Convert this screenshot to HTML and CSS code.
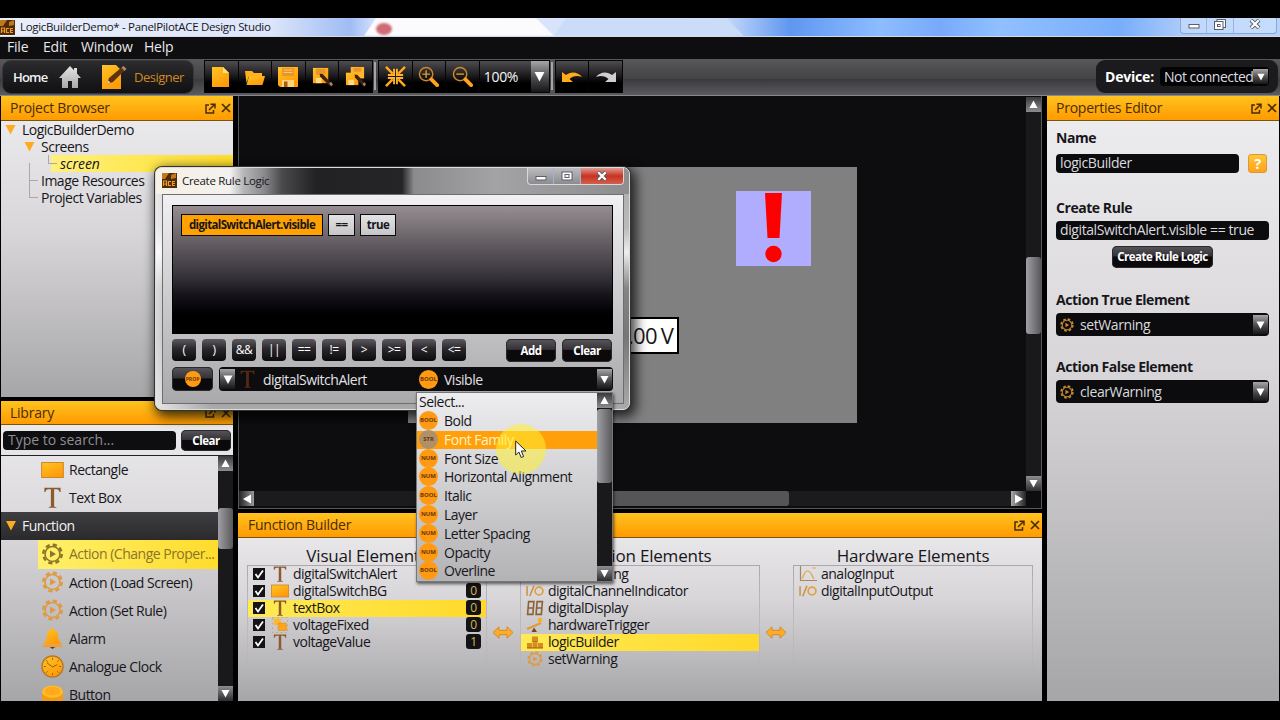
FILE: index.html
```html
<!DOCTYPE html>
<html>
    <head>
        <meta charset="UTF-8">
        <title>LogicBuilderDemo* - PanelPilotACE Design Studio</title>
        <link rel="stylesheet" href="styles.css">
    </head>
    <body>
        <svg class="defs" width="0" height="0">
            <defs>
                <linearGradient id="amber" x1="0" y1="0" x2="0.6" y2="1">
                    <stop offset="0" stop-color="#ffc526"/>
                    <stop offset="1" stop-color="#ff9a08"/>
                </linearGradient>
                <linearGradient id="silver" x1="0" y1="0" x2="0" y2="1">
                    <stop offset="0" stop-color="#e4e4e4"/>
                    <stop offset="1" stop-color="#a9a9ab"/>
                </linearGradient>
            </defs>
            <symbol id="i-app" viewBox="0 0 15 15">
                <rect width="15" height="15" fill="#4d2b0b"/>
                <path d="M0 0h7L3 6H0zM9 2l5-2v5l-5 1z" fill="#c07a1c"/>
                <path d="M1.5 13V8h3v5M2 11h2M9 8.500H6.500v4H9M13 8.500h-2.500v4H13M10.500 10.500H13" stroke="#ef9a22" stroke-width="1.200" fill="none"/>
            </symbol>
            <symbol id="i-pop" viewBox="0 0 11 11">
                <path d="M4 2H1v8h7.500V7M5.500 1.200H10v4.300M9.800 1.300L4 7" fill="none" stroke="currentColor" stroke-width="1.500"/>
            </symbol>
            <symbol id="i-close" viewBox="0 0 10 10">
                <path d="M1 1l8 8M9 1L1 9" stroke="currentColor" stroke-width="1.700"/>
            </symbol>
            <symbol id="i-down" viewBox="0 0 10 10"><path d="M0.500 1h9L5 9.500z" fill="currentColor"/></symbol>
            <symbol id="i-up" viewBox="0 0 10 10"><path d="M0.500 9h9L5 0.500z" fill="currentColor"/></symbol>
            <symbol id="i-left" viewBox="0 0 10 10"><path d="M9 0.500v9L1 5z" fill="currentColor"/></symbol>
            <symbol id="i-right" viewBox="0 0 10 10"><path d="M1 0.500v9L9 5z" fill="currentColor"/></symbol>
            <symbol id="i-home" viewBox="0 0 24 24">
                <path d="M12 1L1 13h3v10h6v-7h4v7h6V13h3l-4-4.500V3h-3v2.200z" fill="url(#silver)"/>
            </symbol>
            <symbol id="i-designer" viewBox="0 0 26 26">
                <path d="M1 1h14l5 5v19H1z" fill="url(#amber)"/>
                <path d="M6 20l2-6L21 3l3 3-12 12z" fill="#5d3210"/>
                <path d="M6 20l1-3.500 2.500 2z" fill="#f7d9a0"/>
                <path d="M20.500 3.500L22.500 2l3 3-2 2z" fill="#b08a70"/>
            </symbol>
            <symbol id="i-new" viewBox="0 0 22 22">
                <path d="M2 1h11l6 6v14H2z" fill="url(#amber)"/><path d="M13 1v6h6z" fill="#ffdf80"/>
            </symbol>
            <symbol id="i-open" viewBox="0 0 22 22">
                <path d="M1 5h7l2 2h8v3H5L2.500 17z" fill="#ffb21c"/><path d="M5 10h16l-2.500 9H2.500z" fill="url(#amber)"/>
            </symbol>
            <symbol id="i-save" viewBox="0 0 22 22">
                <path d="M1 1h20v20H3l-2-2z" fill="url(#amber)"/>
                <path d="M5 2h12v8H5z" fill="#e8952a"/><path d="M6.500 4h9M6.500 6.500h9" stroke="#ffc95e"/>
                <path d="M5 14h12v7H5z" fill="#ffd47a"/><path d="M7 15.500h3.500V21H7z" fill="#a85c14"/>
            </symbol>
            <symbol id="i-saveas" viewBox="0 0 22 22">
                <path d="M1 2h16v16H1z" fill="url(#amber)"/><path d="M4 3h10v6H4z" fill="#e8952a"/><path d="M4 12.500h6V18H4z" fill="#ffdb82"/>
                <path d="M8 8l3 .5 10 10-2.500 2.500-10-10z" fill="#3b2113"/><path d="M18 18l2-1.500 2 3-2 2z" fill="#b08060"/>
            </symbol>
            <symbol id="i-saveall" viewBox="0 0 22 22">
                <path d="M6 1h14v12H6z" fill="#ffb62a"/><path d="M1 7h13v13H1z" fill="url(#amber)"/>
                <path d="M9 2h8v4H9z" fill="#e8952a"/><path d="M3.500 14.500h6V20h-6z" fill="#ffdb82"/>
                <path d="M10 9l3 .5 8.500 9-2.500 2.500-8.500-9z" fill="#3b2113"/><path d="M18.500 18.500l2-1.500 1.500 2.500-2 2z" fill="#b08060"/>
            </symbol>
            <symbol id="i-fit" viewBox="0 0 22 22">
                <path d="M1 1l7 7M21 1l-7 7M1 21l7-7M21 21l-7-7" stroke="#ffa818" stroke-width="2.600"/>
                <path d="M9.500 3v6.500H3M12.500 3v6.500H19M9.500 19v-6.500H3M12.500 19v-6.500H19" stroke="#ffb12b" stroke-width="2" fill="none"/>
            </symbol>
            <symbol id="i-zoomin" viewBox="0 0 22 22">
                <circle cx="8.500" cy="8.500" r="7" fill="none" stroke="#c98a2b" stroke-width="1.500"/>
                <path d="M4.500 8.500h8M8.500 4.500v8" stroke="#d9982d" stroke-width="1.500"/>
                <path d="M14 14l6 6" stroke="#ffa41a" stroke-width="4" stroke-linecap="round"/>
            </symbol>
            <symbol id="i-zoomout" viewBox="0 0 22 22">
                <circle cx="8.500" cy="8.500" r="7" fill="none" stroke="#c98a2b" stroke-width="1.500"/>
                <path d="M4.500 8.500h8" stroke="#d9982d" stroke-width="1.500"/>
                <path d="M14 14l6 6" stroke="#ffa41a" stroke-width="4" stroke-linecap="round"/>
            </symbol>
            <symbol id="i-undo" viewBox="0 0 22 14">
                <path d="M1 2v10h11L8.500 9c3-2.500 7-4 12.500-2C17 1.500 9.500 1 5 5z" fill="#ffab1a"/>
            </symbol>
            <symbol id="i-redo" viewBox="0 0 22 14">
                <path d="M21 2v10H10l3.500-3C10.500 6.500 6.500 5 1 7 5 1.500 12.500 1 17 5z" fill="#cfcfd1"/>
            </symbol>
            <symbol id="i-rect" viewBox="0 0 24 17"><rect x=".5" y=".5" width="23" height="16" fill="url(#amber)" stroke="#c98324"/></symbol>
            <symbol id="i-text" viewBox="0 0 18 22">
                <path d="M.5 .8h17v4.500h-1.200c-.3-2-1-3-3-3h-2.600v17c0 1.200.6 1.500 2.300 1.600v.8H5v-.8c1.700-.1 2.300-.4 2.300-1.600v-17H4.700c-2 0-2.700 1-3 3H.5z" fill="currentColor"/>
            </symbol>
            <symbol id="i-gear" viewBox="0 0 22 22">
                <circle cx="11" cy="11" r="9.300" fill="none" stroke="currentColor" stroke-width="2.400" stroke-dasharray="4.200 3.100"/>
                <circle cx="11" cy="11" r="7.500" fill="none" stroke="currentColor" stroke-width="1.600"/>
                <path d="M8.500 7.500l6 3.500-6 3.500z" fill="currentColor"/>
            </symbol>
            <symbol id="i-bell" viewBox="0 0 22 22">
                <path d="M11 0c1.500 0 2 1 2 2 3.500 1 4 4 4 7 0 4 1.500 5 3.500 8H1.500C3.500 14 5 13 5 9c0-3 .5-6 4-7 0-1 .5-2 2-2z" fill="url(#amber)"/>
                <path d="M1 17.500h20v2.500H1z" fill="#f1a02c"/><path d="M8 20h6l-3 2z" fill="#6b3b10"/>
            </symbol>
            <symbol id="i-clock" viewBox="0 0 24 24">
                <circle cx="12" cy="12" r="11" fill="url(#amber)" stroke="#b87924" stroke-width="1.500"/>
                <path d="M6 8l6 4.500L17 10M12 3v2M12 19v2M3 12h2M19 12h2M5.500 5.500L7 7M17 17l1.500 1.500M5.500 18.500L7 17M17 7l1.500-1.500" stroke="#8f5b17" fill="none"/>
            </symbol>
            <symbol id="i-button" viewBox="0 0 24 22">
                <path d="M1 8v7c0 8 22 8 22 0V8z" fill="#f39b15"/><ellipse cx="12" cy="8" rx="11" ry="6.500" fill="#ffbc2b"/>
                <ellipse cx="12" cy="7.500" rx="8" ry="4.500" fill="#ffa91b"/>
            </symbol>
            <symbol id="i-io" viewBox="0 0 17 11">
                <path d="M1 1v9M3.500 10.500L7.500 .5" stroke="#c9913e" stroke-width="1.400"/><circle cx="12.300" cy="5.500" r="3.700" fill="none" stroke="#e0a040" stroke-width="1.600"/>
            </symbol>
            <symbol id="i-seg" viewBox="0 0 17 14">
                <path d="M2.500 1h5l-1 12h-5zM2 7h5M10.500 1h5l-1 12h-5zM10 7h5" fill="none" stroke="#8a6138" stroke-width="1.500"/>
            </symbol>
            <symbol id="i-trigger" viewBox="0 0 18 16">
                <path d="M1 12L15 6" stroke="#e39a30" stroke-width="2"/><circle cx="14" cy="3" r="2.300" fill="#ffaf24"/><path d="M8 10.500l3 4.500H5.500z" fill="#7b4310"/>
            </symbol>
            <symbol id="i-blocks" viewBox="0 0 18 16">
                <path d="M6 2.500h6V8H6zM1 9h5.500v5H1zM7 9h4.500v5H7zM12 9h5v5h-5z" fill="#d98c1e"/>
                <path d="M6.500 8h5M1 14h16" stroke="#9c5b12" stroke-width="1.200"/>
            </symbol>
            <symbol id="i-group" viewBox="0 0 18 18">
                <rect x=".5" y=".5" width="17" height="17" fill="none" stroke="#c5a36a" stroke-dasharray="2 3"/>
                <path d="M2 2h8v7H2z" fill="#ffb82a"/><path d="M7 7h9v8H7z" fill="#ffa51d" stroke="#e5952a"/>
            </symbol>
            <symbol id="i-wave" viewBox="0 0 18 16">
                <path d="M1.500 0v14.500H18" fill="none" stroke="#a88660" stroke-width="1.200"/><path d="M3 12.500C5 10 5 5 8.500 5s4 4 6.500 8M13 2h4" fill="none" stroke="#e4a548" stroke-width="1.200"/>
            </symbol>
            <symbol id="i-link" viewBox="0 0 22 13">
                <path d="M1 6.500L7 .8v3.500h8V.8l6 5.700-6 5.700V8.700H7v3.500z" fill="#ffad24" stroke="#d18a2c"/>
            </symbol>
            <symbol id="i-tick" viewBox="0 0 12 12"><rect width="12" height="12" fill="#141316"/><path d="M2.500 6l2.500 3.500L10 2.500" fill="none" stroke="#fff" stroke-width="1.800"/></symbol>
            <symbol id="i-min" viewBox="0 0 12 10"><rect x="1" y="5.500" width="10" height="3.500" fill="#fff" stroke="#5b5f6c"/></symbol>
            <symbol id="i-max" viewBox="0 0 12 10"><rect x="1" y="1" width="10" height="8" fill="#fff" stroke="#5b5f6c"/><rect x="4" y="3.500" width="4" height="3" fill="none" stroke="#5b5f6c"/></symbol>
            <symbol id="i-restore" viewBox="0 0 12 11"><rect x="3" y=".5" width="8.500" height="8" fill="#fff" stroke="#5b5f6c"/><rect x=".5" y="2.500" width="8.500" height="8" fill="#fff" stroke="#5b5f6c"/><rect x="3.500" y="5.500" width="2.500" height="2" fill="none" stroke="#5b5f6c"/></symbol>
            <symbol id="i-x" viewBox="0 0 12 10"><path d="M2 1l8 8M10 1L2 9" stroke="#5b5f6c" stroke-width="4"/><path d="M2.300 1.300l7.400 7.400M9.700 1.300L2.300 8.700" stroke="#fff" stroke-width="2.200"/></symbol>
        </svg>

        <div class="app">
            <div class="titlebar">
                <svg class="app-icon"><use href="#i-app"/></svg>
                <span class="titlebar-text">LogicBuilderDemo* - PanelPilotACE Design Studio</span>
                <div class="ghost-tab"><i></i></div>
                <div class="ghost-tab dim"></div>
                <div class="win-btns">
                    <span><svg width="12" height="10"><use href="#i-min"/></svg></span>
                    <span><svg width="12" height="11"><use href="#i-restore"/></svg></span>
                    <span class="wide"><svg width="12" height="10"><use href="#i-x"/></svg></span>
                </div>
            </div>
            <div class="menubar">
                <span class="m-file">File</span><span class="m-edit">Edit</span><span class="m-window">Window</span><span>Help</span>
            </div>
            <div class="toolbar">
                <div class="modes">
                    <span class="mode-home">Home</span>
                    <svg width="24" height="24"><use href="#i-home"/></svg>
                    <svg class="designer-icon" width="26" height="26"><use href="#i-designer"/></svg>
                    <span class="mode-designer">Designer</span>
                </div>
                <div class="tools">
                    <span class="tool"><svg width="22" height="22"><use href="#i-new"/></svg></span>
                    <span class="tool"><svg width="22" height="22"><use href="#i-open"/></svg></span>
                    <span class="tool"><svg width="22" height="22"><use href="#i-save"/></svg></span>
                    <span class="tool"><svg width="21" height="21"><use href="#i-saveas"/></svg></span>
                    <span class="tool"><svg width="21" height="21"><use href="#i-saveall"/></svg></span>
                </div>
                <div class="divider"></div>
                <div class="tools">
                    <span class="tool"><svg width="21" height="21"><use href="#i-fit"/></svg></span>
                    <span class="tool"><svg width="21" height="21"><use href="#i-zoomin"/></svg></span>
                    <span class="tool"><svg width="21" height="21"><use href="#i-zoomout"/></svg></span>
                    <span class="tool zoom-level">100%<b class="drop"><svg width="11" height="13" preserveAspectRatio="none"><use href="#i-down"/></svg></b></span>
                </div>
                <div class="divider"></div>
                <div class="tools">
                    <span class="tool"><svg width="22" height="14"><use href="#i-undo"/></svg></span>
                    <span class="tool"><svg width="22" height="14"><use href="#i-redo"/></svg></span>
                </div>
                <div class="device">
                    <b class="device-label">Device:</b>
                    <div class="device-select"><span>Not connected</span><b class="drop"><svg width="8" height="8"><use href="#i-down"/></svg></b></div>
                </div>
            </div>

            <div class="workspace">
                <div class="col-left">
                    <div class="panel project">
                        <div class="panel-head"><span>Project Browser</span><svg width="11" height="11"><use href="#i-pop"/></svg><svg width="10" height="10"><use href="#i-close"/></svg></div>
                        <ul class="tree">
                            <li class="lv0"><svg class="caret" width="13" height="11"><use href="#i-down"/></svg>LogicBuilderDemo</li>
                            <li class="lv1"><svg class="caret" width="13" height="11"><use href="#i-down"/></svg>Screens</li>
                            <li class="lv2"><i class="elbow"></i><span class="tree-active">screen</span></li>
                            <li class="lv1b"><i class="elbow"></i>Image Resources</li>
                            <li class="lv1b"><i class="elbow"></i>Project Variables</li>
                        </ul>
                    </div>
                    <div class="panel library">
                        <div class="panel-head"><span>Library</span><svg width="11" height="11"><use href="#i-pop"/></svg><svg width="10" height="10"><use href="#i-close"/></svg></div>
                        <div class="search"><div class="search-box">Type to search...</div><button class="gloss search-clear">Clear</button></div>
                        <div class="library-body">
                            <ul class="items">
                                <li><svg width="23" height="16"><use href="#i-rect"/></svg>Rectangle</li>
                                <li><svg class="ico-t" width="23" height="21"><use href="#i-text"/></svg>Text Box</li>
                                <li class="section"><svg class="caret" width="12" height="11"><use href="#i-down"/></svg>Function</li>
                                <li class="active"><svg width="23" height="22"><use href="#i-gear"/></svg>Action (Change Proper...</li>
                                <li><svg class="ico-g" width="23" height="22"><use href="#i-gear"/></svg>Action (Load Screen)</li>
                                <li><svg class="ico-g" width="23" height="22"><use href="#i-gear"/></svg>Action (Set Rule)</li>
                                <li><svg width="23" height="21"><use href="#i-bell"/></svg>Alarm</li>
                                <li><svg width="23" height="23"><use href="#i-clock"/></svg>Analogue Clock</li>
                                <li><svg width="23" height="21"><use href="#i-button"/></svg>Button</li>
                            </ul>
                            <div class="vscroll">
                                <b class="sbtn"><svg width="9" height="9"><use href="#i-up"/></svg></b>
                                <i class="thumb"></i>
                                <b class="sbtn end"><svg width="9" height="9"><use href="#i-down"/></svg></b>
                            </div>
                        </div>
                    </div>
                </div>

                <div class="col-mid">
                    <div class="canvas">
                        <div class="stage">
                            <div class="screen">
                                <div class="alert"><svg width="75" height="75" viewBox="0 0 75 75"><path d="M29 2h17l-2.500 45h-12z" fill="#f00"/><circle cx="37.500" cy="63" r="8.200" fill="#f00"/></svg></div>
                                <div class="readout">0.00<span>V</span></div>
                            </div>
                        </div>
                        <div class="vscroll">
                            <b class="sbtn"><svg width="9" height="9"><use href="#i-up"/></svg></b>
                            <i class="thumb"></i>
                            <b class="sbtn end"><svg width="9" height="9"><use href="#i-down"/></svg></b>
                        </div>
                        <div class="hscroll">
                            <b class="sbtn"><svg width="10" height="10"><use href="#i-left"/></svg></b>
                            <i class="thumb"></i>
                            <b class="sbtn end"><svg width="10" height="10"><use href="#i-right"/></svg></b>
                        </div>
                    </div>
                    <div class="panel builder">
                        <div class="panel-head"><span>Function Builder</span><svg width="11" height="11"><use href="#i-pop"/></svg><svg width="10" height="10"><use href="#i-close"/></svg></div>
                        <div class="builder-body">
                            <div class="elements visual">
                                <h3>Visual Elements</h3>
                                <ul>
                                    <li><svg class="tick" width="12" height="12"><use href="#i-tick"/></svg><svg class="ico ico-t"><use href="#i-text"/></svg>digitalSwitchAlert<b class="count">0</b></li>
                                    <li><svg class="tick" width="12" height="12"><use href="#i-tick"/></svg><svg class="ico"><use href="#i-rect"/></svg>digitalSwitchBG<b class="count">0</b></li>
                                    <li class="active"><svg class="tick" width="12" height="12"><use href="#i-tick"/></svg><svg class="ico ico-t"><use href="#i-text"/></svg>textBox<b class="count">0</b></li>
                                    <li><svg class="tick" width="12" height="12"><use href="#i-tick"/></svg><svg class="ico"><use href="#i-group"/></svg>voltageFixed<b class="count">0</b></li>
                                    <li><svg class="tick" width="12" height="12"><use href="#i-tick"/></svg><svg class="ico ico-t"><use href="#i-text"/></svg>voltageValue<b class="count">1</b></li>
                                </ul>
                            </div>
                            <div class="link"><svg width="22" height="13"><use href="#i-link"/></svg></div>
                            <div class="elements">
                                <h3>Function Elements</h3>
                                <ul>
                                    <li><svg class="ico ico-g"><use href="#i-gear"/></svg>clearWarning</li>
                                    <li><svg class="ico"><use href="#i-io"/></svg>digitalChannelIndicator</li>
                                    <li><svg class="ico"><use href="#i-seg"/></svg>digitalDisplay</li>
                                    <li><svg class="ico"><use href="#i-trigger"/></svg>hardwareTrigger</li>
                                    <li class="active"><svg class="ico"><use href="#i-blocks"/></svg>logicBuilder</li>
                                    <li><svg class="ico ico-g"><use href="#i-gear"/></svg>setWarning</li>
                                </ul>
                            </div>
                            <div class="link"><svg width="22" height="13"><use href="#i-link"/></svg></div>
                            <div class="elements">
                                <h3>Hardware Elements</h3>
                                <ul>
                                    <li><svg class="ico"><use href="#i-wave"/></svg>analogInput</li>
                                    <li><svg class="ico"><use href="#i-io"/></svg>digitalInputOutput</li>
                                </ul>
                            </div>
                        </div>
                    </div>
                </div>

                <div class="panel props">
                    <div class="panel-head"><span>Properties Editor</span><svg width="11" height="11"><use href="#i-pop"/></svg><svg width="10" height="10"><use href="#i-close"/></svg></div>
                    <div class="props-body">
                        <h4>Name</h4>
                        <div class="name-row"><div class="field">logicBuilder</div><b class="help">?</b></div>
                        <h4 class="rule-title">Create Rule</h4>
                        <div class="field">digitalSwitchAlert.visible == true</div>
                        <button class="gloss create-rule">Create Rule Logic</button>
                        <h4 class="true-title">Action True Element</h4>
                        <div class="field select"><svg width="14" height="14"><use href="#i-gear"/></svg><span>setWarning</span><b class="drop"><svg width="9" height="10"><use href="#i-down"/></svg></b></div>
                        <h4 class="false-title">Action False Element</h4>
                        <div class="field select"><svg width="14" height="14"><use href="#i-gear"/></svg><span>clearWarning</span><b class="drop"><svg width="9" height="10"><use href="#i-down"/></svg></b></div>
                    </div>
                </div>
            </div>
        </div>

        <div class="dialog">
            <div class="dialog-title">
                <svg class="app-icon"><use href="#i-app"/></svg><span>Create Rule Logic</span>
                <div class="win-btns dark">
                    <span><svg width="12" height="10"><use href="#i-min"/></svg></span>
                    <span><svg width="12" height="10"><use href="#i-max"/></svg></span>
                    <span class="wide red"><svg width="12" height="10"><use href="#i-x"/></svg></span>
                </div>
            </div>
            <div class="dialog-body">
                <div class="expression">
                    <span class="token on">digitalSwitchAlert.visible</span><span class="token op">==</span><span class="token">true</span>
                </div>
                <div class="ops">
                    <button>(</button><button>)</button><button>&amp;&amp;</button><button>||</button><button>==</button><button>!=</button><button>&gt;</button><button>&gt;=</button><button>&lt;</button><button>&lt;=</button>
                    <button class="gloss add">Add</button><button class="gloss">Clear</button>
                </div>
                <div class="operand">
                    <button class="gloss prop"><i class="badge">PROP</i></button>
                    <div class="operand-field">
                        <b class="drop"><svg width="10" height="11"><use href="#i-down"/></svg></b>
                        <svg class="ico-dark" width="17" height="18"><use href="#i-text"/></svg>
                        <span class="operand-name">digitalSwitchAlert</span>
                        <i class="badge">BOOL</i><span class="operand-prop">Visible</span>
                        <b class="drop last"><svg width="9" height="11"><use href="#i-down"/></svg></b>
                    </div>
                </div>
            </div>
        </div>

        <div class="dropdown">
            <ul>
                <li class="none">Select...</li>
                <li><i class="badge">BOOL</i>Bold</li>
                <li class="hover"><i class="badge grey">STR</i>Font Family</li>
                <li><i class="badge">NUM</i>Font Size</li>
                <li><i class="badge">NUM</i>Horizontal Alignment</li>
                <li><i class="badge">BOOL</i>Italic</li>
                <li><i class="badge">NUM</i>Layer</li>
                <li><i class="badge">NUM</i>Letter Spacing</li>
                <li><i class="badge">NUM</i>Opacity</li>
                <li><i class="badge">BOOL</i>Overline</li>
            </ul>
            <div class="vscroll">
                <b class="sbtn"><svg width="9" height="9"><use href="#i-up"/></svg></b>
                <i class="thumb"></i>
                <b class="sbtn end"><svg width="9" height="9"><use href="#i-down"/></svg></b>
            </div>
        </div>
        <div class="halo"></div>
        <svg class="cursor" width="12" height="19" viewBox="0 0 12 19"><path d="M.7 1v14l3.200-3 2.300 5.500 2.400-1L6.300 11H11z" fill="#fff" stroke="#222"/></svg>
    </body>
</html>
```

FILE: styles.css
```css
* {
    box-sizing:border-box
}
body {
    margin:0;
    width:1280px;
    height:720px;
    overflow:hidden;
    background:#000;
    color:#17161b;
    font-family:"Open Sans", "Noto Sans", sans-serif;
    font-size:14px;
    letter-spacing:-0.5px;
    line-height:17px;
    white-space:nowrap
}
ul {
    list-style:none;
    margin:0;
    padding:0
}
h3, h4 {
    margin:0
}
svg {
    flex:none;
    display:block
}
i {
    font-style:normal
}
button {
    border:0;
    padding:0;
    font:inherit;
    letter-spacing:inherit;
    color:#fff
}
.defs {
    position:absolute
}
.app {
    padding-top:18px
}

/* window title */
.titlebar {
    display:flex;
    height:19px;
    overflow:hidden;
    background:linear-gradient(90deg, #e9eefa 0, #dde6fa 270px, #9fbcf4 350px, #dfe9fb 380px, #cfdffa 720px, #5f97f0 790px, #8dbcff 880px, #78aafa 940px, #91c0ff 1000px, #78adfa 1120px, #a9cafa 1180px, #b7d2fa 100%);
    border-bottom:1px solid #d5dae4
}
.app-icon {
    width:15px;
    height:15px;
    margin:2px 5px 0 0
}
.titlebar-text {
    font-size:11.500px;
    letter-spacing:-0.320px;
    line-height:18px;
    width:344px
}
.ghost-tab {
    width:190px;
    background:#fbfafd;
    clip-path:polygon(12px 0, 172px 0, 100% 100%, 0 100%);
    filter:blur(1px)
}
.ghost-tab i {
    display:block;
    width:16px;
    height:12px;
    margin:5px 0 0 12px;
    border-radius:50%;
    background:#cf6b72
}
.ghost-tab.dim {
    background:#cbdcf8
}
.win-btns {
    display:flex;
    margin-left:auto;
    margin-right:3px;
    width:97px;
    height:16px;
    border:1px solid #8ea7ce;
    border-top:0;
    border-radius:0 0 4px 4px;
    overflow:hidden;
    background:rgba(230,240,255,.35)
}
.win-btns span {
    display:flex;
    align-items:center;
    justify-content:center;
    width:27px;
    padding-bottom:3px;
    border-right:1px solid #9cb4da
}
.win-btns .wide {
    width:43px;
    border:0
}

.menubar {
    display:flex;
    height:22px;
    padding-left:7px;
    background:#0e0d10;
    color:#e8e8ea;
    letter-spacing:-0.200px;
    line-height:20px
}
.m-file { width:36px }
.m-edit { width:38px }
.m-window { width:63px }

/* toolbar */
.toolbar {
    display:flex;
    height:37px;
    padding:1px 2px 2px;
    background:linear-gradient(#58575a, #434245 55%, #3a393c 56%, #5b5a5e);
    border-bottom:1px solid #89888b
}
.modes {
    display:flex;
    align-items:center;
    width:192px;
    height:34px;
    margin-right:10px;
    padding-left:10px;
    border-radius:9px;
    border:1px solid #39383b;
    background:linear-gradient(#2c2b2e, #1d1c1f 50%, #111013);
    font-size:13px
}
.mode-home {
    width:45px;
    color:#f2f2f2;
    font-weight:600;
    letter-spacing:-0.800px
}
.designer-icon {
    margin:0 7px 0 19px
}
.mode-designer {
    color:#d0891f;
    font-weight:500
}
.tools {
    display:flex;
    gap:1px;
    padding:1px;
    background:#050506
}
.tool {
    display:flex;
    align-items:center;
    justify-content:center;
    width:32.600px;
    background:linear-gradient(#4f4c51, #1c1a1d 48%, #000 70%)
}
.divider {
    width:2px;
    margin:2px 2px 3px 1px;
    background:#a5a4a7
}
.zoom-level {
    width:69px;
    justify-content:space-between;
    padding-left:4px;
    color:#f5f5f5;
    letter-spacing:-0.300px
}
.drop {
    display:flex;
    flex:none;
    align-items:center;
    justify-content:center;
    color:#fff;
    background:linear-gradient(#a6a5a8, #4b4a4d 55%, #161518)
}
.zoom-level .drop {
    width:18px;
    height:100%
}
.device {
    display:flex;
    align-items:center;
    width:182px;
    height:33px;
    margin-left:auto;
    padding-left:9px;
    border-radius:9px;
    background:#1b1a1d
}
.device-label {
    width:55px;
    color:#fff;
    letter-spacing:-0.200px
}
.device-select {
    display:flex;
    align-items:center;
    width:109px;
    height:19px;
    padding-left:4px;
    border-radius:4px;
    background:#040405;
    color:#dcdce0
}
.device-select .drop {
    width:15px;
    height:15px;
    margin:0 1px 0 auto
}

/* panels */
.workspace {
    display:flex;
    gap:5px;
    height:605px;
    padding:0 1px
}
.col-left {
    display:flex;
    flex-direction:column;
    gap:4px;
    width:232px
}
.col-mid {
    display:flex;
    flex-direction:column;
    gap:4px;
    width:804px
}
.panel {
    display:flex;
    flex-direction:column;
    overflow:hidden;
    background:linear-gradient(#eeedef, #d8d6d9 45%, #a6a5a7)
}
.panel-head {
    display:flex;
    flex:none;
    align-items:center;
    height:25px;
    padding:0 2px 0 9px;
    background:linear-gradient(#ffc31f, #ffa60a 70%, #ff9c00);
    border-bottom:1px solid #7a5310;
    color:#4a2c05
}
.panel-head span {
    flex:1;
    padding-bottom:1px;
    letter-spacing:-0.250px
}
.panel-head svg + svg {
    margin-left:5px
}
.project {
    height:301px
}
.tree li {
    position:relative;
    display:flex;
    height:17px
}
.caret {
    color:#ffab1e
}
.tree .caret {
    margin:3px 5px 0 0
}
.lv0 { padding-left:3px }
.lv1 { padding-left:22px }
.lv2 { padding-left:50px }
.lv1b { padding-left:40px }
.tree-active {
    flex:1;
    padding-left:9px;
    font-style:italic;
    letter-spacing:0;
    background:linear-gradient(90deg, #fff07a, #ffdf2e)
}
.elbow {
    position:absolute;
    left:28px;
    top:-9px;
    width:9px;
    height:18px;
    border:solid #aaa8ac;
    border-width:0 0 1px 1px
}
.lv2 .elbow {
    left:47px;
    top:0;
    height:9px
}
.library {
    flex:1
}
.library .panel-head {
    height:24px
}
.search {
    display:flex;
    flex:none;
    gap:5px;
    height:31px;
    padding:5px 2px;
    border-bottom:1px solid #222
}
.search-box {
    width:173px;
    height:19px;
    margin-top:1px;
    padding-left:5px;
    border-radius:4px;
    background:#0e0d10;
    color:#8f8e92;
    letter-spacing:0
}
.gloss {
    border-radius:5px;
    background:linear-gradient(#59575b, #353337 45%, #0b090c 50%, #0b090c);
    box-shadow:0 0 0 1px #2a292c inset;
    font-size:11.500px;
    font-weight:700;
    text-align:center
}
.search-clear {
    width:50px;
    height:21px;
    margin-top:0
}
.library-body {
    display:flex;
    flex:1;
    overflow:hidden
}
.items {
    flex:none;
    width:217px;
    height:245px;
    overflow:hidden
}
.items li {
    display:flex;
    align-items:center;
    height:28.150px;
    padding-left:3px;
    padding-bottom:1px;
    margin-left:37px
}
.items li svg {
    margin-right:5px
}
.items .section {
    margin-left:0;
    padding-left:4px;
    background:linear-gradient(#3f3e41, #2a292c);
    color:#f1f1f1
}
.items .active {
    background:linear-gradient(90deg, #fff06c, #ffdc2c);
    color:#8c7428
}
.ico-t {
    color:#8c5a30
}
.ico-g {
    color:#e0993e
}

/* scrollbars */
.vscroll {
    display:flex;
    flex:none;
    flex-direction:column;
    width:15px;
    background:#19181b
}
.sbtn {
    display:flex;
    align-items:center;
    justify-content:center;
    flex:none;
    height:15px;
    color:#fff;
    background:linear-gradient(#3a393c, #8d8c90)
}
.vscroll .end {
    margin-top:auto;
    background:linear-gradient(#8d8c90, #2c2b2e)
}
.thumb {
    border-radius:3px;
    background:linear-gradient(90deg, #a09fa3, #59585b)
}
.library .thumb {
    height:41px;
    margin-top:37px
}

/* design canvas */
.canvas {
    display:grid;
    grid-template-columns:787px 15px;
    grid-template-rows:394px 15px;
    height:413px;
    padding:1px 0 3px;
    border:solid #59585b;
    border-width:0 1px 1px;
    background:#0d0d0f
}
.stage {
    position:relative
}
.screen {
    position:absolute;
    left:169px;
    top:70px;
    width:449px;
    height:256px;
    background:#808080
}
.alert {
    position:absolute;
    left:328px;
    top:24px;
    width:75px;
    height:75px;
    background:#b0adff
}
.readout {
    position:absolute;
    left:189px;
    top:150px;
    width:82px;
    height:37px;
    padding-right:4px;
    border:2px solid #000;
    background:#fff;
    font-size:22px;
    letter-spacing:-0.800px;
    line-height:33px;
    text-align:right
}
.readout span {
    margin-left:4px
}
.canvas .vscroll .thumb {
    height:77px;
    margin-top:145px
}
.hscroll {
    display:flex;
    background:#1b1a1d
}
.hscroll .sbtn {
    width:15px;
    height:15px;
    background:linear-gradient(90deg, #222, #99989b)
}
.hscroll .end {
    margin-left:auto;
    background:linear-gradient(90deg, #aaa, #222)
}
.hscroll .thumb {
    width:305px;
    margin-left:230px;
    background:#555457
}

/* function builder */
.builder {
    flex:1
}
.builder .panel-head {
    padding-left:10px
}
.builder-body {
    display:flex;
    padding:8px 9px 0
}
.elements {
    width:240px
}
.elements h3 {
    height:19px;
    font-size:17px;
    font-weight:400;
    letter-spacing:-0.200px;
    line-height:20px;
    text-align:center
}
.elements ul {
    height:112px;
    border:1px solid;
    border-bottom:0;
    border-image:linear-gradient(#aaa8ac, transparent) 1
}
.elements li {
    display:flex;
    align-items:center;
    height:17px;
    padding:0 0 2px 5px
}
.elements .active {
    background:linear-gradient(90deg, #ffea55, #ffd92a)
}
.tick {
    margin-right:6px
}
.ico {
    width:18px;
    height:16px;
    margin-right:4px
}
.count {
    width:15px;
    height:15px;
    margin-left:auto;
    margin-right:5px;
    border-radius:3px;
    background:#131214;
    color:#d9b45a;
    font-size:12px;
    line-height:15px;
    font-weight:400;
    text-align:center
}
.link {
    width:33px;
    padding:80px 0 0 5px
}

/* properties */
.props {
    width:232px
}
.props-body {
    padding:8px 10px 0 9px
}
.props h4 {
    height:25px;
    letter-spacing:-0.450px
}
.name-row {
    display:flex;
    gap:9px
}
.name-row .field {
    width:183px
}
.field {
    height:19px;
    padding-left:4px;
    border-radius:4px;
    background:#0c0b0e;
    color:#dadade;
    letter-spacing:-0.400px;
    line-height:18px
}
.help {
    width:19px;
    height:19px;
    border-radius:3px;
    background:linear-gradient(#ffc738, #ffa21a);
    border:1px solid #d99a35;
    color:#fff;
    text-align:center
}
.props .rule-title {
    height:22px;
    margin-top:26px
}
.create-rule {
    display:block;
    width:101px;
    height:22px;
    margin:6px auto 0;
    padding-bottom:2px
}
.props .true-title {
    height:22px;
    margin-top:23px
}
.props .false-title {
    height:22px;
    margin-top:22px
}
.field.select {
    display:flex;
    align-items:center;
    height:23px
}
.select > svg {
    margin-right:6px;
    color:#c78a35
}
.select .drop {
    width:15px;
    height:19px;
    margin:0 1px 0 auto
}

/* rule dialog */
.dialog {
    position:absolute;
    left:155px;
    top:167px;
    width:475px;
    height:243px;
    padding:0 7px;
    border:1px solid #dcdcdc;
    border-radius:7px;
    background:linear-gradient(90deg, rgba(255,255,255,.7), rgba(255,255,255,0) 12%), linear-gradient(#aaa9ab, #bbb 25%, #eee 35%, #858486 50%, #777 70%, #aaa);
    box-shadow:0 0 0 1px #333, 3px 4px 12px 3px rgba(0,0,0,.75)
}
.dialog-title {
    display:flex;
    height:26px;
    margin:0 -7px;
    padding-left:6px;
    border-radius:6px 6px 0 0;
    background:linear-gradient(90deg, #f7f1e4 0, #f3f1ef 74px, #b5b4b6 88px, #8b8a8c 108px, #4a494b 126px, #222124 160px, #252427 246px, #8b8a8c 258px, #a3a2a4 340px, #8e8d8f 100%);
    font-size:11.500px;
    letter-spacing:-0.300px
}
.dialog-title .app-icon {
    margin-top:5px
}
.dialog-title span {
    line-height:25px
}
.dialog .win-btns {
    height:17px;
    width:97px;
    margin-right:5px;
    border-color:#d8d7d9;
    background:linear-gradient(#bcbbbd, #8c8b8d)
}
.dialog .win-btns span {
    padding-bottom:0
}
.dialog .win-btns .red {
    background:linear-gradient(#df9b90, #c9311f 50%, #d2604d)
}
.dialog-body {
    width:462px;
    height:210px;
    margin-left:-1px;
    padding:10px 9px;
    border:1px solid #6e6d70;
    background:linear-gradient(#f1f0f2, #cfced0 45%, #a9a8aa)
}
.expression {
    display:flex;
    align-items:flex-start;
    gap:5px;
    width:441px;
    height:129px;
    padding:8px;
    border:1px solid #000;
    background:linear-gradient(#958d91, #37333a 55%, #17131b 70%, #000 85%)
}
.token {
    height:22px;
    width:36px;
    border:1px solid #0a0a0a;
    background:linear-gradient(#e3e2e4, #c6c5c7);
    font-size:11.500px;
    font-weight:700;
    line-height:20px;
    text-align:center
}
.token.on {
    width:142px;
    letter-spacing:-0.650px;
    background:#ffa100
}
.token.op {
    width:27px
}
.ops {
    display:flex;
    gap:6px;
    margin-top:5px
}
.ops button:not(.gloss) {
    width:24px;
    height:22px;
    border-radius:4px;
    background:linear-gradient(#5c5a5e, #29272b 45%, #0a090b);
    font-size:12px;
    line-height:20px
}
.ops .gloss {
    width:50px;
    height:23px
}
.ops .add {
    margin-left:34px
}
.operand {
    display:flex;
    gap:6px;
    margin-top:5px
}
.prop {
    display:flex;
    justify-content:center;
    align-items:center;
    width:41px;
    height:24px
}
.badge {
    display:flex;
    flex:none;
    align-items:center;
    justify-content:center;
    width:19px;
    height:19px;
    border-radius:50%;
    background:#ff9a12;
    color:#6b3608;
    font-size:6px;
    font-weight:700;
    letter-spacing:0;
    line-height:19px
}
.prop .badge {
    width:16px;
    height:16px;
    font-size:5px
}
.operand-field {
    display:flex;
    align-items:center;
    width:394px;
    height:24px;
    padding:1px;
    border-radius:4px;
    background:#0d0c0f;
    color:#e2e2e6
}
.operand-field .drop {
    width:15px;
    height:20px
}
.ico-dark {
    margin:0 7px 0 4px;
    color:#55290f
}
.operand-name {
    width:156px
}
.operand-prop {
    margin-left:6px
}
.operand-field .last {
    margin-left:auto
}

/* property list */
.dropdown {
    position:absolute;
    left:416px;
    top:392px;
    display:flex;
    width:197px;
    height:190px;
    border:1px solid #777;
    background:linear-gradient(#edecee, #b3b2b5);
    box-shadow:1px 2px 3px rgba(0,0,0,.6)
}
.dropdown ul {
    flex:1
}
.dropdown li {
    display:flex;
    align-items:center;
    height:18.780px;
    padding:0 0 1px 2px
}
.dropdown .badge {
    margin-right:6px
}
.dropdown .hover {
    background:#ffa00a;
    color:#fff0c4
}
.badge.grey {
    background:#b09068
}
.dropdown .thumb {
    height:74px;
    margin-top:1px
}
.halo {
    position:absolute;
    left:496px;
    top:424px;
    width:50px;
    height:50px;
    border-radius:50%;
    background:rgba(255,240,50,.55)
}
.cursor {
    position:absolute;
    left:515px;
    top:440px
}
```
